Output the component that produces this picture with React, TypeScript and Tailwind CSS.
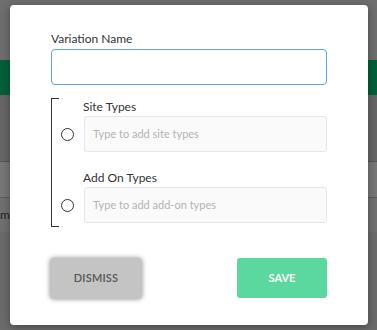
function Backdrop() {
  return (
    <div className="flex h-[330px] flex-col bg-[#6c6c6c]">
      <div className="h-[60px] bg-[#6e6e6e]" />
      <div className="h-[35px] bg-[#03603a]" />
      <div className="h-[67px] border-b border-[#555] bg-[#666666]" />
      <div className="h-[36px] border-b border-[#5a5a5a] bg-[#777777]" />
      <div className="flex h-[34px] items-center bg-[#707070] text-[12px] text-[#222]">
        <span>m</span>
      </div>
      <div className="flex-1 bg-[#6b6b6b]" />
    </div>
  );
}

function Bracket() {
  return (
    <div className="w-[8px] shrink-0 border-y border-l border-[#333]" />
  );
}

function Radio() {
  return (
    <div className="h-[13px] w-[13px] shrink-0 rounded-full border border-[#333] bg-white" />
  );
}

function TypeField({ label, placeholder }: { label: string; placeholder: string }) {
  return (
    <div className="flex flex-col">
      <div className="pl-[32px] text-[12px] leading-[16px] text-[#333]">{label}</div>
      <div className="mt-[1px] flex items-center gap-[10px] pl-[10px]">
        <Radio />
        <div className="flex h-[36px] flex-1 items-center rounded-[3px] border border-[#e6e6e6] bg-[#fafafa] px-[8px] text-[11px] text-[#b3b3b3]">
          {placeholder}
        </div>
      </div>
    </div>
  );
}

export default function App() {
  return (
    <div className="relative h-[330px] w-[377px] overflow-hidden font-['Lato',sans-serif]">
      <Backdrop />
      <div className="absolute left-[10px] top-[5px] h-[320px] w-[358px] rounded-[4px] bg-white px-[41px] pt-[26px] shadow-[0_2px_8px_rgba(0,0,0,0.35)]">
        <div className="text-[12px] leading-[16px] text-[#333]">Variation Name</div>
        <div className="mt-[2px] h-[36px] w-full rounded-[4px] border border-[#5aa5e2] bg-white" />
        <div className="mt-[13px] flex h-[129px]">
          <Bracket />
          <div className="-ml-[8px] flex flex-1 flex-col gap-[18px] pt-[1px]">
            <TypeField label="Site Types" placeholder="Type to add site types" />
            <TypeField label="Add On Types" placeholder="Type to add add-on types" />
          </div>
        </div>
        <div className="mt-[31px] flex justify-between">
          <button className="h-[41px] w-[92px] -translate-x-[1px] rounded-[4px] bg-[#c4c4c4] text-[11px] font-semibold tracking-[0.2px] text-[#555] shadow-[0_0_5px_rgba(0,0,0,0.45)]">
            DISMISS
          </button>
          <button className="h-[40px] w-[90px] rounded-[3px] bg-[#5ad89d] text-[11px] font-bold text-white">
            SAVE
          </button>
        </div>
      </div>
    </div>
  );
}
